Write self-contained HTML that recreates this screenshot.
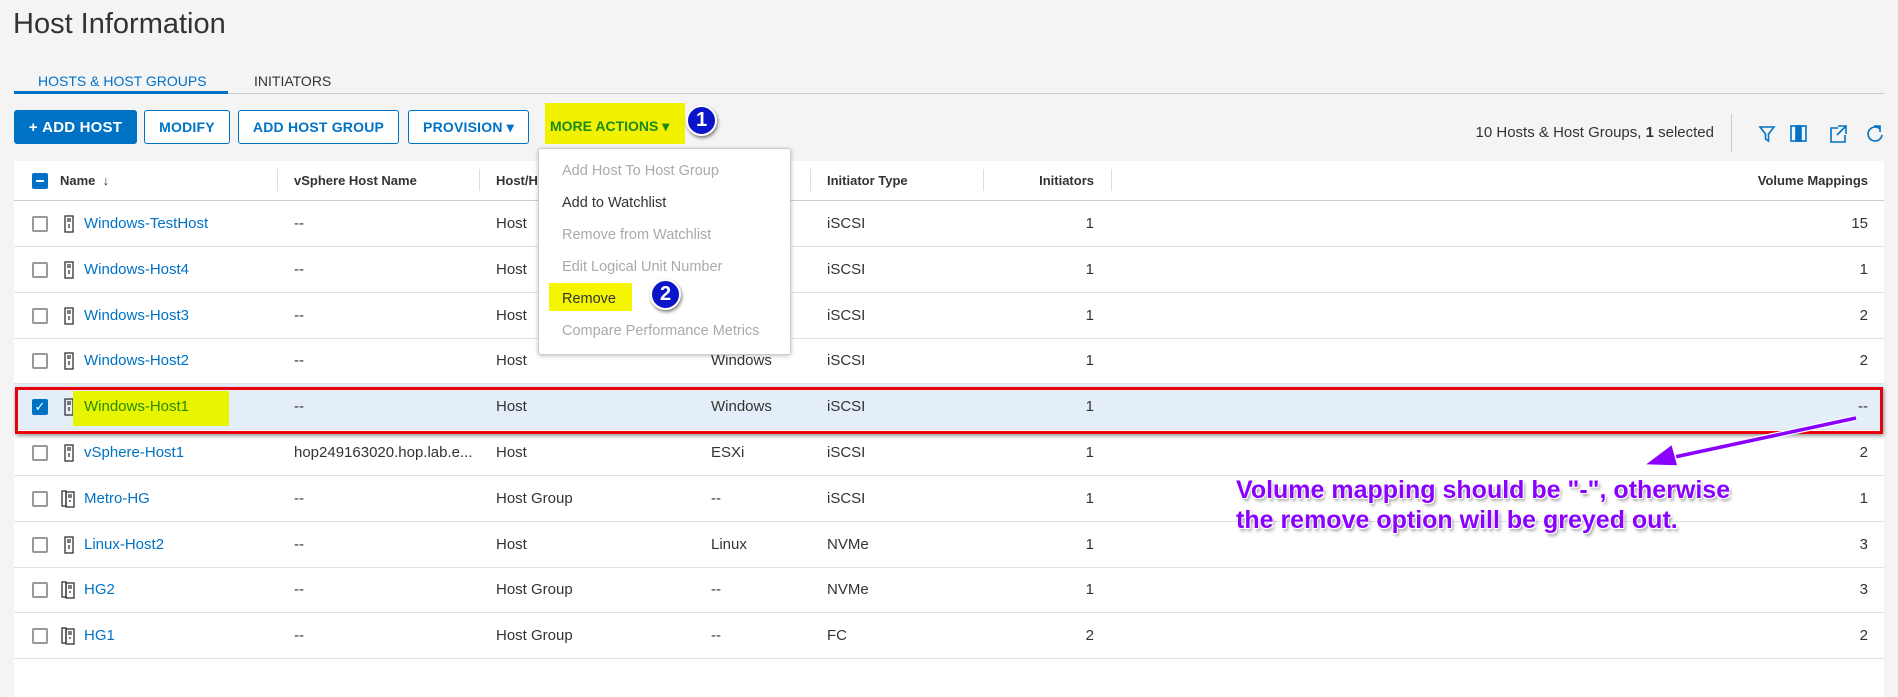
<!DOCTYPE html>
<html><head><meta charset="utf-8"><style>
*{box-sizing:border-box;margin:0;padding:0}
body{width:1898px;height:697px;background:#f4f4f4;font-family:"Liberation Sans",sans-serif;position:relative;overflow:hidden;color:#333}
.a{position:absolute}
.title{left:13px;top:8px;font-size:29px;color:#333;font-weight:300}
.tab{top:73px;font-size:14px;color:#333}
.btn{top:110px;height:34px;border:1px solid #0072c6;border-radius:3px;color:#0072c6;font-size:14px;font-weight:bold;display:flex;align-items:center;justify-content:center;background:#fff;letter-spacing:.2px;white-space:nowrap}
.tbl{left:14px;top:161px;width:1870px;height:536px;background:#fff}
.hdr{font-size:13px;font-weight:bold;color:#333;top:173px}
.vd{width:1px;height:22px;background:#ddd;top:169px}
.row{left:14px;width:1870px;height:46px;border-bottom:1px solid #dde3ea}
.cell{font-size:15px;color:#333}
.cb{width:16px;height:16px;border:2px solid #999;border-radius:2px;background:#fff}
.nm{color:#0072c6;font-size:15px}
.r{text-align:right}
.dd{left:538px;top:148px;width:253px;height:207px;background:#fff;border:1px solid #ccc;border-radius:3px;box-shadow:0 1px 4px rgba(0,0,0,.25)}
.di{left:562px;font-size:14.5px;color:#aaa}
.num{width:31px;height:31px;border-radius:50%;background:#0a14c8;border:2px solid #fff;box-shadow:1px 2px 3px rgba(0,0,0,.5);color:#fff;font-weight:bold;font-size:20px;display:flex;align-items:center;justify-content:center}
.ann{left:1236px;top:475px;font-size:25px;font-weight:bold;color:#8a00ff;line-height:30px;text-shadow:1px 1px 0 #fff,-1px -1px 0 #fff,1px -1px 0 #fff,-1px 1px 0 #fff,2px 3px 3px rgba(0,0,0,.4)}
</style></head><body>
<div class="a title">Host Information</div>
<div class="a tab" style="left:38px;color:#0072c6">HOSTS &amp; HOST GROUPS</div>
<div class="a tab" style="left:254px">INITIATORS</div>
<div class="a" style="left:14px;top:93px;width:1870px;height:1px;background:#ccc"></div>
<div class="a" style="left:14px;top:91px;width:214px;height:3px;background:#0072c6"></div>

<div class="a btn" style="left:14px;width:123px;background:#0072c6;color:#fff;font-size:15px">+&nbsp;ADD HOST</div>
<div class="a btn" style="left:144px;width:86px">MODIFY</div>
<div class="a btn" style="left:238px;width:161px">ADD HOST GROUP</div>
<div class="a btn" style="left:408px;width:121px">PROVISION ▾</div>
<div class="a" style="left:545px;top:103px;width:140px;height:41px;background:#f2f200"></div>
<div class="a" style="left:550px;top:118px;font-size:14px;font-weight:bold;color:#1a8a1a">MORE ACTIONS ▾</div>
<div class="a num" style="left:686px;top:105px">1</div>

<div class="a" style="left:1400px;top:124px;font-size:15px;color:#333;width:314px;text-align:right">10 Hosts &amp; Host Groups, <b>1</b> selected</div>
<div class="a" style="left:1731px;top:114px;width:1px;height:38px;background:#ccc"></div>
<svg class="a" style="left:1758px;top:123px" width="150" height="22" viewBox="0 0 150 22" fill="none" stroke="#0072c6" stroke-width="1.6">
<path d="M2 4h14l-5.5 7v7l-3-2v-5z"/>
<rect x="33" y="3" width="15" height="15"/><rect x="38" y="3" width="5" height="15" fill="#0072c6"/>
<path d="M80 5h-7v14h14v-7M80 3h8v8M88 3l-9 9"/>
<path d="M122 6a7 7 0 1 0 2 6M116 3h6v6"/>
</svg>

<div class="a tbl"></div>
<div class="a" style="left:14px;top:200px;width:1870px;height:1px;background:#ccc"></div>
<div class="a" style="left:32px;top:173px;width:16px;height:16px;background:#0072c6;border-radius:2px"><div class="a" style="left:4px;top:7px;width:8px;height:2px;background:#fff"></div></div>
<div class="a hdr" style="left:60px">Name &nbsp;↓</div>
<div class="a vd" style="left:277px"></div>
<div class="a hdr" style="left:294px">vSphere Host Name</div>
<div class="a vd" style="left:479px"></div>
<div class="a hdr" style="left:496px">Host/Host Group</div>
<div class="a vd" style="left:688px"></div>
<div class="a vd" style="left:810px"></div>
<div class="a hdr" style="left:827px">Initiator Type</div>
<div class="a vd" style="left:983px"></div>
<div class="a hdr r" style="left:990px;width:104px">Initiators</div>
<div class="a vd" style="left:1111px"></div>
<div class="a hdr r" style="left:1700px;width:168px">Volume Mappings</div>

<div id="rows"></div>
<script>
var d=[["Windows-TestHost","--","Host","Windows","iSCSI","1","15",0],
["Windows-Host4","--","Host","Windows","iSCSI","1","1",0],
["Windows-Host3","--","Host","Windows","iSCSI","1","2",0],
["Windows-Host2","--","Host","Windows","iSCSI","1","2",0],
["Windows-Host1","--","Host","Windows","iSCSI","1","--",0],
["vSphere-Host1","hop249163020.hop.lab.e...","Host","ESXi","iSCSI","1","2",0],
["Metro-HG","--","Host Group","--","iSCSI","1","1",1],
["Linux-Host2","--","Host","Linux","NVMe","1","3",0],
["HG2","--","Host Group","--","NVMe","1","3",1],
["HG1","--","Host Group","--","FC","2","2",1]];
var h="";
for(var i=0;i<10;i++){var t=201+i*45.8,r=d[i],c=t+14,sel=i==4;
h+='<div class="a row" style="top:'+t+'px;'+(sel?'background:#e3eef8':'')+'"></div>';
if(sel)h+='<div class="a" style="left:32px;top:'+(c+1)+'px;width:16px;height:16px;background:#0072c6;border-radius:2px;color:#fff;font-size:13px;line-height:16px;text-align:center">✓</div>';
else h+='<div class="a cb" style="left:32px;top:'+(c+1)+'px"></div>';
if(r[7])h+='<svg class="a" style="left:61px;top:'+c+'px" width="14" height="18" viewBox="0 0 14 18" fill="none" stroke="#333" stroke-width="1.3"><rect x="1" y="1" width="4" height="15"/><rect x="5" y="2" width="8" height="15"/><path d="M7 5h4M7 7h4M9 10v2"/></svg>';
else h+='<svg class="a" style="left:64px;top:'+c+'px" width="10" height="18" viewBox="0 0 10 18" fill="none" stroke="#333" stroke-width="1.3"><rect x="1" y="1" width="8" height="16"/><path d="M3 4h4M3 6h4M5 9v4"/></svg>';
if(sel)h+='<div class="a" style="left:73px;top:391px;width:156px;height:35px;background:#e8f500"></div>';
h+='<div class="a nm" style="left:84px;top:'+c+'px;'+(sel?'color:#2a8a00':'')+'">'+r[0]+'</div>';
h+='<div class="a cell" style="left:294px;top:'+c+'px">'+r[1]+'</div>';
h+='<div class="a cell" style="left:496px;top:'+c+'px">'+r[2]+'</div>';
h+='<div class="a cell" style="left:711px;top:'+c+'px">'+r[3]+'</div>';
h+='<div class="a cell" style="left:827px;top:'+c+'px">'+r[4]+'</div>';
h+='<div class="a cell r" style="left:1000px;width:94px;top:'+c+'px">'+r[5]+'</div>';
h+='<div class="a cell r" style="left:1760px;width:108px;top:'+c+'px">'+r[6]+'</div>';}
document.getElementById("rows").innerHTML=h;
</script>

<div class="a" style="left:15px;top:387px;width:1868px;height:47px;border:3px solid #e8000b;box-shadow:1px 2px 4px rgba(0,0,0,.4)"></div>

<div class="a dd"></div>
<div class="a di" style="top:163px">Add Host To Host Group</div>
<div class="a di" style="top:195px;color:#333">Add to Watchlist</div>
<div class="a di" style="top:227px">Remove from Watchlist</div>
<div class="a di" style="top:259px">Edit Logical Unit Number</div>
<div class="a" style="left:549px;top:283px;width:83px;height:28px;background:#f5f500"></div>
<div class="a di" style="top:291px;color:#333">Remove</div>
<div class="a di" style="top:323px">Compare Performance Metrics</div>
<div class="a num" style="left:650px;top:279px">2</div>

<svg class="a" style="left:1630px;top:400px" width="240" height="80" viewBox="0 0 240 80">
<path d="M226 18 L40 58" stroke="#fff" stroke-width="6"/>
<path d="M226 18 L40 58" stroke="#8a00ff" stroke-width="3.5"/>
<path d="M14 65 L42 44 L48 66 Z" fill="#8a00ff" stroke="#fff" stroke-width="1.5"/>
</svg>
<div class="a ann">Volume mapping should be "-", otherwise<br>the remove option will be greyed out.</div>
</body></html>
